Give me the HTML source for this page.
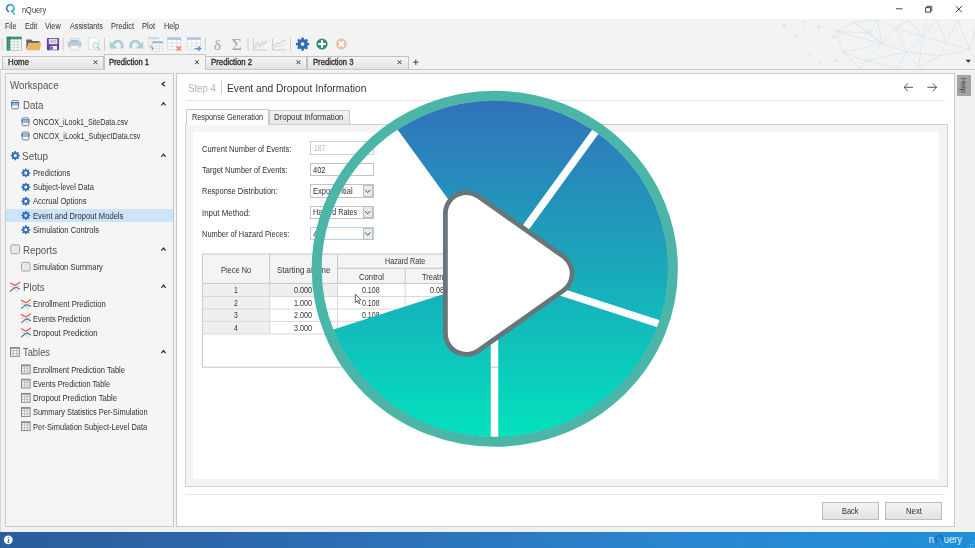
<!DOCTYPE html>
<html><head><meta charset="utf-8"><title>nQuery</title>
<style>
html,body{margin:0;padding:0;}
body{width:975px;height:548px;overflow:hidden;position:relative;background:#f0f0f0;font-family:"Liberation Sans",sans-serif;}
.a{position:absolute;box-sizing:border-box;}
.t{position:absolute;transform-origin:0 50%;white-space:nowrap;line-height:14px;height:14px;font-family:"Liberation Sans",sans-serif;}
#titlebar{left:0;top:0;width:975px;height:19px;background:#fff;}
#toolbar{left:0;top:19px;width:975px;height:50px;background:#f3f3f3;}
#tbline{left:0;top:69px;width:975px;height:1px;background:#c6c6c6;}
#content{left:0;top:70px;width:975px;height:462px;background:#f1f1f1;border-left:1px solid #d6d6d6;border-top:1px solid #f8f8f8;}
.tab{top:55.5px;height:13.5px;border:1px solid #c2c2c2;border-bottom:none;background:linear-gradient(#f4f4f4,#e3e3e3);}
.tab.act{top:54px;height:16px;background:#f3f3f3;border-color:#c6c6c6;}
#ws{left:5px;top:73px;width:168.5px;height:454px;background:#f5f5f5;border:1px solid #c9c9c9;}
#main{left:176px;top:73px;width:779px;height:454px;background:#fff;border:1px solid #c9c9c9;}
#sel{left:6px;top:208.8px;width:166.5px;height:13.4px;background:#cde4f7;}
#status{left:0;top:531.5px;width:975px;height:16.5px;background:linear-gradient(90deg,#2b5c9b 0%,#2c6db3 35%,#2a86d0 70%,#1f8fd8 100%);}
.hl{height:1px;background:#e6e6e6;}
#stab1{left:185.5px;top:108.5px;width:83px;height:16.5px;background:#fbfbfb;border:1px solid #c9c9c9;border-bottom:none;}
#stab2{left:268.5px;top:110px;width:81.5px;height:14px;background:linear-gradient(#f3f3f3,#e6e6e6);border:1px solid #c9c9c9;border-bottom:none;}
#tabbox{left:184.5px;top:124px;width:763px;height:363px;background:#f4f4f4;border:1px solid #cfcfcf;}
#tabin{left:192.5px;top:131.5px;width:746.5px;height:347.5px;background:#fff;}
.inp{left:310px;width:63.5px;height:13.4px;background:#fff;border:1px solid #c3c3c3;}
.dd{left:362.5px;width:10.5px;height:12px;background:#ebebeb;border:1px solid #bdbdbd;}
.btn{top:502px;height:18px;width:57px;background:linear-gradient(#f3f3f3,#e2e2e2);border:1px solid #bcbcbc;}
#help{left:957px;top:75px;width:14px;height:21px;background:#a3a3a3;}
svg{position:absolute;left:0;top:0;}

</style></head>
<body>
<div class="a" id="titlebar"></div>
<div class="a" id="toolbar"></div>
<div class="a" id="tbline"></div>
<div class="a" id="content"></div>
<div class="a tab" style="left:2px;width:102px"></div>
<div class="a tab" style="left:205px;width:102px"></div>
<div class="a tab" style="left:306.5px;width:102px"></div>
<div class="a tab act" style="left:103.5px;width:102px"></div>
<div class="a" id="ws"></div>
<div class="a" id="sel"></div>
<div class="a" id="main"></div>
<div class="a hl" style="left:186px;top:100px;width:759px"></div>
<div class="a hl" style="left:186px;top:494px;width:759px"></div>
<div class="a" id="tabbox"></div>
<div class="a" id="tabin"></div>
<div class="a" id="stab2"></div>
<div class="a" id="stab1"></div>
<div class="a" style="left:221.3px;top:81.3px;width:1px;height:12.5px;background:#cfcfcf"></div>
<div class="a inp" style="top:141.4px;border-color:#cfcfcf"></div>
<div class="a inp" style="top:163.1px"></div>
<div class="a inp" style="top:184.4px"></div>
<div class="a inp" style="top:205.7px"></div>
<div class="a inp" style="top:227px;border-color:#b4d3ea"></div>
<div class="a dd" style="top:185.1px"></div>
<div class="a dd" style="top:206.4px"></div>
<div class="a dd" style="top:227.7px"></div>
<svg width="975" height="548" viewBox="0 0 975 548" shape-rendering="auto">
<g>
<rect x="202.3" y="254" width="330" height="113.2" fill="#fff"/>
<rect x="202.3" y="254" width="330" height="29.4" fill="#f4f4f4"/>
<rect x="202.3" y="283.4" width="67.4" height="50.6" fill="#efefef"/>
<rect x="269.7" y="283.4" width="67.9" height="13.1" fill="#efefef"/>
<g stroke="#d9d9d9" stroke-width="1" fill="none">
<path d="M202.3 296.5H472.8M202.3 309H472.8M202.3 321.4H472.8M202.3 334H472.8"/>
<path d="M269.7 283.4V334M337.6 283.4V334M405.2 283.4V334M472.8 283.4V334"/>
</g>
<g stroke="#c6c6c6" stroke-width="1" fill="none">
<path d="M202.3 283.4H472.8M337.6 268.3H472.8M269.7 254V283.4M337.6 254V283.4M405.2 268.3V283.4M472.8 254V283.4"/>
<rect x="202.3" y="254" width="330" height="113.2"/>
</g>
</g>
</svg>


<div class="a btn" style="left:822px"></div>
<div class="a btn" style="left:885px"></div>
<div class="a" id="help"></div>
<span class="t" style="left:958.5px;top:75.5px;font-size:7.8px;color:#444;transform-origin:0 0;transform:translate(8.8px,1.5px) rotate(90deg);line-height:10px;height:10px;letter-spacing:-0.2px">Help</span>
<div class="a" id="status"></div>
<span class="t" style="left:21.5px;top:2.6px;font-size:8.6px;transform:scaleX(0.8621);color:#3a3a3a;">nQuery</span>
<span class="t" style="left:5.1px;top:19.4px;font-size:8.3px;transform:scaleX(0.8449);color:#303030;">File</span>
<span class="t" style="left:24.6px;top:19.4px;font-size:8.3px;transform:scaleX(0.8603);color:#303030;">Edit</span>
<span class="t" style="left:45.4px;top:19.4px;font-size:8.3px;transform:scaleX(0.8799);color:#303030;">View</span>
<span class="t" style="left:69.8px;top:19.4px;font-size:8.3px;transform:scaleX(0.8674);color:#303030;">Assistants</span>
<span class="t" style="left:110.7px;top:19.4px;font-size:8.3px;transform:scaleX(0.8905);color:#303030;">Predict</span>
<span class="t" style="left:142.0px;top:19.4px;font-size:8.3px;transform:scaleX(0.9093);color:#303030;">Plot</span>
<span class="t" style="left:163.7px;top:19.4px;font-size:8.3px;transform:scaleX(0.8783);color:#303030;">Help</span>
<span class="t" style="left:7.8px;top:55.2px;font-size:8.4px;transform:scaleX(0.9354);color:#303030;-webkit-text-stroke:0.35px #303030">Home</span>
<span class="t" style="left:109.2px;top:55.2px;font-size:8.4px;transform:scaleX(0.9043);color:#303030;-webkit-text-stroke:0.35px #303030">Prediction 1</span>
<span class="t" style="left:210.5px;top:55.2px;font-size:8.4px;transform:scaleX(0.9314);color:#303030;-webkit-text-stroke:0.35px #303030">Prediction 2</span>
<span class="t" style="left:312.5px;top:55.2px;font-size:8.4px;transform:scaleX(0.9156);color:#303030;-webkit-text-stroke:0.35px #303030">Prediction 3</span>
<span class="t" style="left:9.8px;top:77.7px;font-size:11px;transform:scaleX(0.8882);color:#555;">Workspace</span>
<span class="t" style="left:22.6px;top:98.0px;font-size:11px;transform:scaleX(0.8774);color:#555;">Data</span>
<span class="t" style="left:22.3px;top:149.4px;font-size:11px;transform:scaleX(0.9043);color:#555;">Setup</span>
<span class="t" style="left:22.6px;top:242.9px;font-size:11px;transform:scaleX(0.8824);color:#555;">Reports</span>
<span class="t" style="left:22.6px;top:280.0px;font-size:11px;transform:scaleX(0.8828);color:#555;">Plots</span>
<span class="t" style="left:22.6px;top:345.4px;font-size:11px;transform:scaleX(0.8491);color:#555;">Tables</span>
<span class="t" style="left:32.8px;top:115.2px;font-size:8.4px;transform:scaleX(0.8486);color:#303030;">ONCOX_iLook1_SiteData.csv</span>
<span class="t" style="left:32.8px;top:129.0px;font-size:8.4px;transform:scaleX(0.8576);color:#303030;">ONCOX_iLook1_SubjectData.csv</span>
<span class="t" style="left:32.8px;top:166.1px;font-size:8.4px;transform:scaleX(0.8977);color:#303030;">Predictions</span>
<span class="t" style="left:32.8px;top:180.2px;font-size:8.4px;transform:scaleX(0.8945);color:#303030;">Subject-level Data</span>
<span class="t" style="left:32.8px;top:194.4px;font-size:8.4px;transform:scaleX(0.9066);color:#303030;">Accrual Options</span>
<span class="t" style="left:32.8px;top:208.5px;font-size:8.4px;transform:scaleX(0.9115);color:#303030;">Event and Dropout Models</span>
<span class="t" style="left:32.8px;top:223.0px;font-size:8.4px;transform:scaleX(0.9102);color:#303030;">Simulation Controls</span>
<span class="t" style="left:32.8px;top:260.0px;font-size:8.4px;transform:scaleX(0.9034);color:#303030;">Simulation Summary</span>
<span class="t" style="left:32.8px;top:297.2px;font-size:8.4px;transform:scaleX(0.9132);color:#303030;">Enrollment Prediction</span>
<span class="t" style="left:32.8px;top:311.5px;font-size:8.4px;transform:scaleX(0.8851);color:#303030;">Events Prediction</span>
<span class="t" style="left:32.8px;top:325.7px;font-size:8.4px;transform:scaleX(0.9312);color:#303030;">Dropout Prediction</span>
<span class="t" style="left:32.8px;top:362.6px;font-size:8.4px;transform:scaleX(0.9038);color:#303030;">Enrollment Prediction Table</span>
<span class="t" style="left:32.8px;top:376.8px;font-size:8.4px;transform:scaleX(0.8824);color:#303030;">Events Prediction Table</span>
<span class="t" style="left:32.8px;top:391.0px;font-size:8.4px;transform:scaleX(0.9174);color:#303030;">Dropout Prediction Table</span>
<span class="t" style="left:32.8px;top:405.3px;font-size:8.4px;transform:scaleX(0.8889);color:#303030;">Summary Statistics Per-Simulation</span>
<span class="t" style="left:32.8px;top:419.5px;font-size:8.4px;transform:scaleX(0.8921);color:#303030;">Per-Simulation Subject-Level Data</span>
<span class="t" style="left:187.7px;top:81.2px;font-size:10.8px;transform:scaleX(0.8937);color:#b4b4b4;">Step 4</span>
<span class="t" style="left:227.3px;top:81.2px;font-size:10.8px;transform:scaleX(0.9487);color:#333;">Event and Dropout Information</span>
<span class="t" style="left:191.5px;top:111.0px;font-size:8.2px;transform:scaleX(0.8913);color:#303030;">Response Generation</span>
<span class="t" style="left:274.0px;top:111.0px;font-size:8.2px;transform:scaleX(0.9603);color:#303030;">Dropout Information</span>
<span class="t" style="left:202.0px;top:142.0px;font-size:8.4px;transform:scaleX(0.8965);color:#303030;">Current Number of Events:</span>
<span class="t" style="left:202.0px;top:163.0px;font-size:8.4px;transform:scaleX(0.8982);color:#303030;">Target Number of Events:</span>
<span class="t" style="left:202.0px;top:184.3px;font-size:8.4px;transform:scaleX(0.8936);color:#303030;">Response Distribution:</span>
<span class="t" style="left:202.0px;top:205.7px;font-size:8.4px;transform:scaleX(0.9430);color:#303030;">Input Method:</span>
<span class="t" style="left:202.0px;top:227.0px;font-size:8.4px;transform:scaleX(0.8888);color:#303030;">Number of Hazard Pieces:</span>
<span class="t" style="left:313.5px;top:142.2px;font-size:8.2px;transform:scaleX(0.8411);color:#bdbdbd;">187</span>
<span class="t" style="left:313.0px;top:163.7px;font-size:8.2px;transform:scaleX(0.9143);color:#303030;">402</span>
<span class="t" style="left:313.0px;top:184.9px;font-size:8.2px;transform:scaleX(0.9253);color:#303030;">Exponential</span>
<span class="t" style="left:313.0px;top:206.2px;font-size:8.2px;transform:scaleX(0.8829);color:#303030;">Hazard Rates</span>
<span class="t" style="left:313.0px;top:227.6px;font-size:8.2px;transform:scaleX(0.9863);color:#303030;">4</span>
<span class="t" style="left:220.8px;top:263.5px;font-size:8.2px;transform:scaleX(0.9087);color:#333;">Piece No</span>
<span class="t" style="left:276.6px;top:263.5px;font-size:8.2px;transform:scaleX(0.9698);color:#333;">Starting at time</span>
<span class="t" style="left:384.8px;top:255.4px;font-size:8.2px;transform:scaleX(0.8745);color:#333;">Hazard Rate</span>
<span class="t" style="left:358.7px;top:271.1px;font-size:8.2px;transform:scaleX(0.9430);color:#333;">Control</span>
<span class="t" style="left:421.7px;top:271.1px;font-size:8.2px;transform:scaleX(0.9131);color:#333;">Treatment</span>
<span class="t" style="left:233.8px;top:284.1px;font-size:8.2px;transform:scaleX(0.8329);color:#333;">1</span>
<span class="t" style="left:294.4px;top:284.1px;font-size:8.2px;transform:scaleX(0.8780);color:#333;">0.000</span>
<span class="t" style="left:361.9px;top:284.1px;font-size:8.2px;transform:scaleX(0.8585);color:#333;">0.108</span>
<span class="t" style="left:429.8px;top:284.1px;font-size:8.2px;transform:scaleX(0.8780);color:#333;">0.081</span>
<span class="t" style="left:233.8px;top:296.8px;font-size:8.2px;transform:scaleX(0.8329);color:#333;">2</span>
<span class="t" style="left:294.4px;top:296.8px;font-size:8.2px;transform:scaleX(0.8780);color:#333;">1.000</span>
<span class="t" style="left:361.9px;top:296.8px;font-size:8.2px;transform:scaleX(0.8585);color:#333;">0.108</span>
<span class="t" style="left:429.8px;top:296.8px;font-size:8.2px;transform:scaleX(0.8780);color:#333;">0.081</span>
<span class="t" style="left:233.8px;top:309.4px;font-size:8.2px;transform:scaleX(0.8329);color:#333;">3</span>
<span class="t" style="left:294.4px;top:309.4px;font-size:8.2px;transform:scaleX(0.8780);color:#333;">2.000</span>
<span class="t" style="left:361.9px;top:309.4px;font-size:8.2px;transform:scaleX(0.8585);color:#333;">0.108</span>
<span class="t" style="left:429.8px;top:309.4px;font-size:8.2px;transform:scaleX(0.8780);color:#333;">0.081</span>
<span class="t" style="left:233.8px;top:322.1px;font-size:8.2px;transform:scaleX(0.8329);color:#333;">4</span>
<span class="t" style="left:294.4px;top:322.1px;font-size:8.2px;transform:scaleX(0.8780);color:#333;">3.000</span>
<span class="t" style="left:361.9px;top:322.1px;font-size:8.2px;transform:scaleX(0.8585);color:#333;">0.108</span>
<span class="t" style="left:429.8px;top:322.1px;font-size:8.2px;transform:scaleX(0.8780);color:#333;">0.081</span>
<span class="t" style="left:842.3px;top:504.2px;font-size:8.4px;transform:scaleX(0.8859);color:#303030;">Back</span>
<span class="t" style="left:905.5px;top:504.2px;font-size:8.4px;transform:scaleX(0.9284);color:#303030;">Next</span>
<svg width="975" height="548" viewBox="0 0 975 548">
<g fill="none" stroke="#cde2ec" stroke-width="0.65">
<path d="M836.5 31.4L842.7 51.9M836.5 31.4L854.0 22.0M854.0 22.0L881.7 43.7M836.5 31.4L881.7 43.7M842.7 51.9L881.7 43.7M842.7 51.9L865.3 61.0M865.3 61.0L881.7 43.7M854.0 22.0L877.6 20.0M877.6 20.0L881.7 43.7M877.6 20.0L896.0 28.3M881.7 43.7L906.3 51.9M896.0 28.3L906.3 51.9M881.7 43.7L896.0 28.3M906.3 51.9L918.6 67.3M906.3 51.9L922.7 36.5M896.0 28.3L922.7 36.5M908.3 20.0L922.7 36.5M922.7 36.5L946.3 42.6M922.7 36.5L918.6 67.3M946.3 42.6L937.0 20.0M946.3 42.6L939.1 56.0M946.3 42.6L969.9 49.8M969.9 49.8L957.6 20.0M946.3 42.6L957.6 20.0M969.9 49.8L975.0 29.3M939.1 56.0L918.6 67.3M906.3 51.9L898.0 67.3M865.3 61.0L906.3 51.9M908.3 20.0L896.0 28.3M926.0 20.0L922.7 36.5M939.1 56.0L969.9 49.8M969.9 49.8L975.0 62.0M842.7 51.9L860.0 68.0M865.3 61.0L860.0 68.0M870.0 33.0L836.5 31.4M870.0 33.0L881.7 43.7M870.0 33.0L854.0 22.0M877.6 20.0L870.0 33.0M896.0 28.3L908.3 20.0M922.7 36.5L937.0 20.0M906.3 51.9L939.1 56.0M898.0 67.3L865.3 61.0"/>
</g>
<g fill="#d8ebf3" opacity="0.9"><circle cx="784" cy="26" r="2.2"/><circle cx="805" cy="22" r="1.5"/><circle cx="795" cy="36" r="1.7"/><circle cx="819" cy="27" r="2.4"/><circle cx="810" cy="55" r="1.8"/><circle cx="820" cy="63" r="1.5"/><circle cx="834" cy="37" r="2"/><circle cx="836" cy="61" r="1.8"/><circle cx="803" cy="31" r="1.1"/></g>
<path d="M784 26L795 36M805 22L803 31L795 36M810 55L804 60" stroke="#e0eef4" stroke-width="0.5" fill="none"/>
<defs><linearGradient id="qg" x1="6" y1="12" x2="14" y2="5" gradientUnits="userSpaceOnUse"><stop offset="0" stop-color="#2a62b4"/><stop offset="0.45" stop-color="#2b86c4"/><stop offset="1" stop-color="#43c6b0"/></linearGradient></defs>
<path d="M8.5 11.4A3.6 3.6 0 1 1 13.5 9.9Q12.6 11.2 11.7 11" fill="none" stroke="url(#qg)" stroke-width="1.7" stroke-linecap="round"/>
<path d="M11.9 11.2L14.4 14.3" fill="none" stroke="#3fc2b0" stroke-width="1.5" stroke-linecap="round"/>
<path d="M896 8.8H902.5" stroke="#333" stroke-width="0.9"/>
<path d="M925.6 7.6H930.4V12.2H925.6ZM927 7.6V6.3H931.8V10.9H930.4" stroke="#333" stroke-width="0.9" fill="none"/>
<path d="M955.7 6L962 12.3M962 6L955.7 12.3" stroke="#333" stroke-width="0.9"/>
<path d="M965.6 59.8H971L968.3 62.8Z" fill="#333"/>
<path d="M2.2 39V50" stroke="#dcdcdc" stroke-width="1.4"/>
<rect x="7" y="37" width="14.4" height="13.2" fill="#fdfdfd" stroke="#6fa893" stroke-width="0.5"/>
<rect x="6.8" y="36.8" width="14.8" height="2.6" fill="#2f8a6f"/><rect x="6.8" y="36.8" width="3.6" height="13.6" fill="#2f8a6f"/>
<path d="M10.4 42H21.4M10.4 44.6H21.4M10.4 47.3H21.4M14.1 39.4V50.2M17.6 39.4V50.2" stroke="#b9c4c0" stroke-width="0.6" fill="none"/>
<path d="M8 40.8h1.2M8 43.4h1.2M8 46h1.2M8 48.6h1.2M12 38h1.2M15.4 38h1.2M19 38h1.2" stroke="#7fd6bf" stroke-width="0.8" fill="none"/>
<path d="M26.3 50V39.4H31.2L32.5 40.9H39.5V43.4H28.4L26.3 50Z" fill="#5f6368"/>
<path d="M28.6 42.8H41.3L39.6 50.2H26.8Z" fill="#e9b45f"/>
<rect x="46.9" y="38" width="12.2" height="12.2" rx="0.8" fill="#6b3fa0"/>
<rect x="48.8" y="38.8" width="8.6" height="5.4" fill="#e4e4e8"/><rect x="50" y="39.8" width="6.2" height="3" fill="#c4c4c8"/>
<rect x="50.6" y="46" width="6.4" height="3.6" fill="#f4f4f4"/><rect x="51.2" y="46.6" width="1.6" height="2.6" fill="#5a3590"/>
<path d="M63.2 38V50.5" stroke="#c4c4c4" stroke-width="0.8"/>
<path d="M104.5 38V50.5" stroke="#c4c4c4" stroke-width="0.8"/>
<path d="M205.2 38V50.5" stroke="#c4c4c4" stroke-width="0.8"/>
<path d="M248.0 38V50.5" stroke="#c4c4c4" stroke-width="0.8"/>
<path d="M290.5 38V50.5" stroke="#c4c4c4" stroke-width="0.8"/>
<rect x="70.2" y="38.4" width="8.6" height="4" fill="#e3edf3" stroke="#bccbd6" stroke-width="0.6"/>
<rect x="67.8" y="41.6" width="13.6" height="5.6" rx="1" fill="#bfc9d3"/>
<rect x="70.6" y="40" width="7.8" height="2.2" fill="#9fc3e0"/>
<rect x="70.4" y="45.6" width="8.4" height="4.4" fill="#f4f6f8" stroke="#c6d0d8" stroke-width="0.6"/>
<path d="M88.4 37.6H95.6L98.6 40.6V49.6H88.4Z" fill="#fbfbfb" stroke="#cfd6dc" stroke-width="0.7"/>
<circle cx="95.4" cy="45.4" r="2.7" fill="#f3f8fb" stroke="#a9c4d8" stroke-width="0.9"/><path d="M97.4 47.4L100.6 50.4" stroke="#a9c4d8" stroke-width="1.2"/>
<path d="M122.20 48.6V45.6A4.4 4.4 0 0 0 113.50 44.6" fill="none" stroke="#a8ced8" stroke-width="2.8"/>
<path d="M109.80 41.4V48.6H117.80Z" fill="#a8ced8"/>
<path d="M130.80 48.6V45.6A4.4 4.4 0 0 1 139.50 44.6" fill="none" stroke="#a8ced8" stroke-width="2.8"/>
<path d="M143.20 41.4V48.6H135.20Z" fill="#a8ced8"/>
<rect x="148.4" y="37.4" width="10.4" height="9.4" fill="#fbfbfb" stroke="#cfd4d9" stroke-width="0.6"/>
<rect x="148.4" y="37.4" width="10.4" height="1.9" fill="#c5d8e8"/>
<path d="M148.4 41.8H158.8M148.4 44.3H158.8M151.9 39.3V46.8M155.4 39.3V46.8" stroke="#cfd4d9" stroke-width="0.6" fill="none"/>
<rect x="152.6" y="41.4" width="10.2" height="9.6" fill="#fbfbfb" stroke="#cfd4d9" stroke-width="0.6"/>
<rect x="152.6" y="41.4" width="10.2" height="1.9" fill="#8fb3d4"/>
<path d="M152.6 45.9H162.8M152.6 48.4H162.8M156.1 43.3V51.0M159.4 43.3V51.0" stroke="#cfd4d9" stroke-width="0.6" fill="none"/>
<path d="M150.6 45.4C150.6 47.6 151.4 48.2 153 48.4M152 47L153.4 48.5L151.8 49.6" stroke="#4d86c4" stroke-width="0.8" fill="none"/>
<rect x="167.4" y="37.4" width="13.4" height="12.4" fill="#fbfbfb" stroke="#cfd4d9" stroke-width="0.6"/>
<rect x="167.4" y="37.4" width="13.4" height="2.5" fill="#a9c5df"/>
<path d="M167.4 43.2H180.8M167.4 46.5H180.8M172.0 39.9V49.8M176.4 39.9V49.8" stroke="#cfd4d9" stroke-width="0.6" fill="none"/>
<path d="M176.6 46.4L181 50.6M181 46.4L176.6 50.6" stroke="#e39079" stroke-width="1.7"/>
<rect x="187.2" y="37.4" width="13.6" height="12.2" fill="#fbfbfb" stroke="#cfd4d9" stroke-width="0.6"/>
<rect x="187.2" y="37.4" width="13.6" height="2.4" fill="#a9c5df"/>
<path d="M187.2 43.1H200.8M187.2 46.3H200.8M191.8 39.8V49.6M196.3 39.8V49.6" stroke="#cfd4d9" stroke-width="0.6" fill="none"/>
<path d="M194.6 48.6H200.2M198.2 46.4L200.6 48.6L198.2 50.8" stroke="#5b93cc" stroke-width="1.3" fill="none"/>
<text x="217.4" y="49.6" font-family="Liberation Serif, serif" font-size="15.5" fill="#a8a8a8" text-anchor="middle">δ</text>
<text x="236.8" y="49.6" font-family="Liberation Serif, serif" font-size="16" fill="#a8a8a8" text-anchor="middle" textLength="10.4" lengthAdjust="spacingAndGlyphs">Σ</text>
<path d="M253.4 38.4V50H267" stroke="#c9c9c9" stroke-width="0.9" fill="none"/>
<path d="M254.4 47.6L257.6 42.2L260.2 46.2L262.6 41.6L264.4 44L266.6 39.4" stroke="#a8c6df" stroke-width="0.8" fill="none"/>
<path d="M254.4 49L258 45.6L261 47.4L264 44L266.6 42.6" stroke="#c3d5e4" stroke-width="0.7" fill="none"/>
<path d="M272.6 38.4V50H286.4" stroke="#c9c9c9" stroke-width="0.9" fill="none"/>
<path d="M273.6 46.4L277 43L280 43.6L283 41L286 39.6" stroke="#a8c6df" stroke-width="0.8" fill="none"/>
<path d="M273.6 48.6L277.4 46L281 46.2L286 43.4" stroke="#c3d5e4" stroke-width="0.7" fill="none"/>
<path d="M307.52 42.79 L309.21 43.00 L309.21 45.20 L307.52 45.41 L307.00 46.66 L308.05 48.00 L306.50 49.55 L305.16 48.50 L303.91 49.02 L303.70 50.71 L301.50 50.71 L301.29 49.02 L300.04 48.50 L298.70 49.55 L297.15 48.00 L298.20 46.66 L297.68 45.41 L295.99 45.20 L295.99 43.00 L297.68 42.79 L298.20 41.54 L297.15 40.20 L298.70 38.65 L300.04 39.70 L301.29 39.18 L301.50 37.49 L303.70 37.49 L303.91 39.18 L305.16 39.70 L306.50 38.65 L308.05 40.20 L307.00 41.54Z M300.79 44.10 a1.81 1.81 0 1 0 3.62 0 a1.81 1.81 0 1 0 -3.62 0Z" fill="#2d6cb6" fill-rule="evenodd"/>
<circle cx="322" cy="44" r="5.6" fill="#368d75"/><path d="M318.3 44H325.7M322 40.3V47.7" stroke="#fff" stroke-width="2.1"/>
<circle cx="341.4" cy="44" r="5.4" fill="#e9bfa8"/><path d="M338.9 41.5L343.9 46.5M343.9 41.5L338.9 46.5" stroke="#fff" stroke-width="2"/>
<path d="M93.6 60.3L97.4 64.1M97.4 60.3L93.6 64.1" stroke="#3a3a3a" stroke-width="1"/>
<path d="M195.1 60.3L198.9 64.1M198.9 60.3L195.1 64.1" stroke="#3a3a3a" stroke-width="1"/>
<path d="M296.6 60.3L300.4 64.1M300.4 60.3L296.6 64.1" stroke="#3a3a3a" stroke-width="1"/>
<path d="M397.6 60.3L401.4 64.1M401.4 60.3L397.6 64.1" stroke="#3a3a3a" stroke-width="1"/>
<path d="M413 62.2H418.6M415.8 59.4V65" stroke="#333" stroke-width="0.9"/>
<path d="M165 81.8L162 84L165 86.2" stroke="#333" stroke-width="1.3" fill="none"/>
<path d="M161.4 105.4L163.5 102.7L165.6 105.4" stroke="#333" stroke-width="1.3" fill="none"/>
<path d="M161.4 156.9L163.5 154.2L165.6 156.9" stroke="#333" stroke-width="1.3" fill="none"/>
<path d="M161.4 250.7L163.5 248.0L165.6 250.7" stroke="#333" stroke-width="1.3" fill="none"/>
<path d="M161.4 287.8L163.5 285.1L165.6 287.8" stroke="#333" stroke-width="1.3" fill="none"/>
<path d="M161.4 353.2L163.5 350.5L165.6 353.2" stroke="#333" stroke-width="1.3" fill="none"/>
<rect x="11.7" y="100.6" width="6.6" height="8.2" rx="1" fill="#fafafa" stroke="#6e6e6e" stroke-width="0.9"/>
<rect x="10.9" y="101.9" width="8.2" height="3.3" rx="0.8" fill="#3a7cc4"/>
<text x="15.00" y="104.65" font-family="Liberation Sans, sans-serif" font-size="3.4" font-weight="bold" fill="#e8f0fa" text-anchor="middle">csv</text>
<rect x="22.2" y="117.9" width="6.6" height="7.8" rx="1" fill="#fafafa" stroke="#6e6e6e" stroke-width="0.9"/>
<rect x="21.4" y="119.2" width="8.2" height="3.2" rx="0.8" fill="#3a7cc4"/>
<text x="25.50" y="121.73" font-family="Liberation Sans, sans-serif" font-size="3.4" font-weight="bold" fill="#e8f0fa" text-anchor="middle">csv</text>
<rect x="22.2" y="132.1" width="6.6" height="7.8" rx="1" fill="#fafafa" stroke="#6e6e6e" stroke-width="0.9"/>
<rect x="21.4" y="133.4" width="8.2" height="3.2" rx="0.8" fill="#3a7cc4"/>
<text x="25.50" y="135.93" font-family="Liberation Sans, sans-serif" font-size="3.4" font-weight="bold" fill="#e8f0fa" text-anchor="middle">csv</text>
<path d="M18.59 154.73 L19.84 154.84 L19.84 156.36 L18.59 156.47 L18.24 157.31 L19.04 158.27 L17.97 159.34 L17.01 158.54 L16.17 158.89 L16.06 160.14 L14.54 160.14 L14.43 158.89 L13.59 158.54 L12.63 159.34 L11.56 158.27 L12.36 157.31 L12.01 156.47 L10.76 156.36 L10.76 154.84 L12.01 154.73 L12.36 153.89 L11.56 152.93 L12.63 151.86 L13.59 152.66 L14.43 152.31 L14.54 151.06 L16.06 151.06 L16.17 152.31 L17.01 152.66 L17.97 151.86 L19.04 152.93 L18.24 153.89Z M13.74 155.60 a1.56 1.56 0 1 0 3.13 0 a1.56 1.56 0 1 0 -3.13 0Z" fill="#2d6cb6" fill-rule="evenodd"/>
<path d="M29.02 172.05 L30.24 172.16 L30.24 173.64 L29.02 173.75 L28.68 174.57 L29.46 175.52 L28.42 176.56 L27.47 175.78 L26.65 176.12 L26.54 177.34 L25.06 177.34 L24.95 176.12 L24.13 175.78 L23.18 176.56 L22.14 175.52 L22.92 174.57 L22.58 173.75 L21.36 173.64 L21.36 172.16 L22.58 172.05 L22.92 171.23 L22.14 170.28 L23.18 169.24 L24.13 170.02 L24.95 169.68 L25.06 168.46 L26.54 168.46 L26.65 169.68 L27.47 170.02 L28.42 169.24 L29.46 170.28 L28.68 171.23Z M24.27 172.90 a1.53 1.53 0 1 0 3.06 0 a1.53 1.53 0 1 0 -3.06 0Z" fill="#2d6cb6" fill-rule="evenodd"/>
<path d="M29.02 186.25 L30.24 186.36 L30.24 187.84 L29.02 187.95 L28.68 188.77 L29.46 189.72 L28.42 190.76 L27.47 189.98 L26.65 190.32 L26.54 191.54 L25.06 191.54 L24.95 190.32 L24.13 189.98 L23.18 190.76 L22.14 189.72 L22.92 188.77 L22.58 187.95 L21.36 187.84 L21.36 186.36 L22.58 186.25 L22.92 185.43 L22.14 184.48 L23.18 183.44 L24.13 184.22 L24.95 183.88 L25.06 182.66 L26.54 182.66 L26.65 183.88 L27.47 184.22 L28.42 183.44 L29.46 184.48 L28.68 185.43Z M24.27 187.10 a1.53 1.53 0 1 0 3.06 0 a1.53 1.53 0 1 0 -3.06 0Z" fill="#2d6cb6" fill-rule="evenodd"/>
<path d="M29.02 200.45 L30.24 200.56 L30.24 202.04 L29.02 202.15 L28.68 202.97 L29.46 203.92 L28.42 204.96 L27.47 204.18 L26.65 204.52 L26.54 205.74 L25.06 205.74 L24.95 204.52 L24.13 204.18 L23.18 204.96 L22.14 203.92 L22.92 202.97 L22.58 202.15 L21.36 202.04 L21.36 200.56 L22.58 200.45 L22.92 199.63 L22.14 198.68 L23.18 197.64 L24.13 198.42 L24.95 198.08 L25.06 196.86 L26.54 196.86 L26.65 198.08 L27.47 198.42 L28.42 197.64 L29.46 198.68 L28.68 199.63Z M24.27 201.30 a1.53 1.53 0 1 0 3.06 0 a1.53 1.53 0 1 0 -3.06 0Z" fill="#2d6cb6" fill-rule="evenodd"/>
<path d="M29.02 214.65 L30.24 214.76 L30.24 216.24 L29.02 216.35 L28.68 217.17 L29.46 218.12 L28.42 219.16 L27.47 218.38 L26.65 218.72 L26.54 219.94 L25.06 219.94 L24.95 218.72 L24.13 218.38 L23.18 219.16 L22.14 218.12 L22.92 217.17 L22.58 216.35 L21.36 216.24 L21.36 214.76 L22.58 214.65 L22.92 213.83 L22.14 212.88 L23.18 211.84 L24.13 212.62 L24.95 212.28 L25.06 211.06 L26.54 211.06 L26.65 212.28 L27.47 212.62 L28.42 211.84 L29.46 212.88 L28.68 213.83Z M24.27 215.50 a1.53 1.53 0 1 0 3.06 0 a1.53 1.53 0 1 0 -3.06 0Z" fill="#2d6cb6" fill-rule="evenodd"/>
<path d="M29.02 228.95 L30.24 229.06 L30.24 230.54 L29.02 230.65 L28.68 231.47 L29.46 232.42 L28.42 233.46 L27.47 232.68 L26.65 233.02 L26.54 234.24 L25.06 234.24 L24.95 233.02 L24.13 232.68 L23.18 233.46 L22.14 232.42 L22.92 231.47 L22.58 230.65 L21.36 230.54 L21.36 229.06 L22.58 228.95 L22.92 228.13 L22.14 227.18 L23.18 226.14 L24.13 226.92 L24.95 226.58 L25.06 225.36 L26.54 225.36 L26.65 226.58 L27.47 226.92 L28.42 226.14 L29.46 227.18 L28.68 228.13Z M24.27 229.80 a1.53 1.53 0 1 0 3.06 0 a1.53 1.53 0 1 0 -3.06 0Z" fill="#2d6cb6" fill-rule="evenodd"/>
<rect x="10.9" y="244.9" width="8.6" height="8.8" rx="1.2" fill="#ececec" stroke="#9a9a9a" stroke-width="0.9"/>
<path d="M14.2 246.4V252.2M16.6 246.4V252.2" stroke="#d9dee3" stroke-width="0.8"/>
<rect x="21.5" y="262.4" width="8.6" height="8.6" rx="1.2" fill="#ececec" stroke="#9a9a9a" stroke-width="0.9"/>
<path d="M24.8 263.9V269.5M27.2 263.9V269.5" stroke="#d9dee3" stroke-width="0.8"/>
<polyline points="10.5,283.0 15.0,285.4 19.5,282.4" fill="none" stroke="#cf5f4c" stroke-width="1.2" stroke-linecap="round" stroke-linejoin="round"/>
<polyline points="10.8,286.0 15.0,288.0 19.0,285.6" fill="none" stroke="#f2bd84" stroke-width="1.1" stroke-linecap="round" stroke-dasharray="1.4 1.2"/>
<polyline points="10.5,291.0 14.2,288.0 16.2,287.3 19.5,289.0" fill="none" stroke="#3d80c2" stroke-width="1.2" stroke-linecap="round" stroke-linejoin="round"/>
<polyline points="15.0,289.0 17.2,291.3" fill="none" stroke="#f2bd84" stroke-width="1.1" stroke-linecap="round" stroke-dasharray="1.2 1.3"/>
<polyline points="21.5,300.4 26.0,302.8 30.5,299.8" fill="none" stroke="#cf5f4c" stroke-width="1.2" stroke-linecap="round" stroke-linejoin="round"/>
<polyline points="21.8,303.4 26.0,305.4 30.0,303.0" fill="none" stroke="#f2bd84" stroke-width="1.1" stroke-linecap="round" stroke-dasharray="1.4 1.2"/>
<polyline points="21.5,308.4 25.2,305.4 27.2,304.7 30.5,306.4" fill="none" stroke="#3d80c2" stroke-width="1.2" stroke-linecap="round" stroke-linejoin="round"/>
<polyline points="26.0,306.4 28.2,308.7" fill="none" stroke="#f2bd84" stroke-width="1.1" stroke-linecap="round" stroke-dasharray="1.2 1.3"/>
<polyline points="21.5,314.6 26.0,317.0 30.5,314.0" fill="none" stroke="#cf5f4c" stroke-width="1.2" stroke-linecap="round" stroke-linejoin="round"/>
<polyline points="21.8,317.6 26.0,319.6 30.0,317.2" fill="none" stroke="#f2bd84" stroke-width="1.1" stroke-linecap="round" stroke-dasharray="1.4 1.2"/>
<polyline points="21.5,322.6 25.2,319.6 27.2,318.9 30.5,320.6" fill="none" stroke="#3d80c2" stroke-width="1.2" stroke-linecap="round" stroke-linejoin="round"/>
<polyline points="26.0,320.6 28.2,322.9" fill="none" stroke="#f2bd84" stroke-width="1.1" stroke-linecap="round" stroke-dasharray="1.2 1.3"/>
<polyline points="21.5,328.8 26.0,331.2 30.5,328.2" fill="none" stroke="#cf5f4c" stroke-width="1.2" stroke-linecap="round" stroke-linejoin="round"/>
<polyline points="21.8,331.8 26.0,333.8 30.0,331.4" fill="none" stroke="#f2bd84" stroke-width="1.1" stroke-linecap="round" stroke-dasharray="1.4 1.2"/>
<polyline points="21.5,336.8 25.2,333.8 27.2,333.1 30.5,334.8" fill="none" stroke="#3d80c2" stroke-width="1.2" stroke-linecap="round" stroke-linejoin="round"/>
<polyline points="26.0,334.8 28.2,337.1" fill="none" stroke="#f2bd84" stroke-width="1.1" stroke-linecap="round" stroke-dasharray="1.2 1.3"/>
<rect x="10.5" y="347.5" width="8.8" height="8.8" fill="#f4f4f4" stroke="#7c7c7c" stroke-width="0.9"/>
<rect x="10.5" y="347.5" width="8.8" height="1.3" fill="#8a8a8a"/>
<path d="M13.5 348.5V355.8M16.5 348.5V355.8M11.0 350.7H18.8M11.0 353.5H18.8" stroke="#b8b8b8" stroke-width="0.8" fill="none"/>
<rect x="21.5" y="365.0" width="8.6" height="8.8" fill="#f4f4f4" stroke="#7c7c7c" stroke-width="0.9"/>
<rect x="21.5" y="365.0" width="8.6" height="1.3" fill="#8a8a8a"/>
<path d="M24.5 366.0V373.3M27.3 366.0V373.3M22.0 368.2H29.6M22.0 371.0H29.6" stroke="#b8b8b8" stroke-width="0.8" fill="none"/>
<rect x="21.5" y="379.2" width="8.6" height="8.8" fill="#f4f4f4" stroke="#7c7c7c" stroke-width="0.9"/>
<rect x="21.5" y="379.2" width="8.6" height="1.3" fill="#8a8a8a"/>
<path d="M24.5 380.2V387.5M27.3 380.2V387.5M22.0 382.4H29.6M22.0 385.2H29.6" stroke="#b8b8b8" stroke-width="0.8" fill="none"/>
<rect x="21.5" y="393.4" width="8.6" height="8.8" fill="#f4f4f4" stroke="#7c7c7c" stroke-width="0.9"/>
<rect x="21.5" y="393.4" width="8.6" height="1.3" fill="#8a8a8a"/>
<path d="M24.5 394.4V401.7M27.3 394.4V401.7M22.0 396.6H29.6M22.0 399.4H29.6" stroke="#b8b8b8" stroke-width="0.8" fill="none"/>
<rect x="21.5" y="407.6" width="8.6" height="8.8" fill="#f4f4f4" stroke="#7c7c7c" stroke-width="0.9"/>
<rect x="21.5" y="407.6" width="8.6" height="1.3" fill="#8a8a8a"/>
<path d="M24.5 408.6V415.9M27.3 408.6V415.9M22.0 410.8H29.6M22.0 413.6H29.6" stroke="#b8b8b8" stroke-width="0.8" fill="none"/>
<rect x="21.5" y="421.8" width="8.6" height="8.8" fill="#f4f4f4" stroke="#7c7c7c" stroke-width="0.9"/>
<rect x="21.5" y="421.8" width="8.6" height="1.3" fill="#8a8a8a"/>
<path d="M24.5 422.8V430.1M27.3 422.8V430.1M22.0 425.0H29.6M22.0 427.8H29.6" stroke="#b8b8b8" stroke-width="0.8" fill="none"/>
<path d="M365 189.8L367.7 192.5L370.4 189.8" stroke="#333" stroke-width="0.9" fill="none"/>
<path d="M365 211.1L367.7 213.8L370.4 211.1" stroke="#333" stroke-width="0.9" fill="none"/>
<path d="M365 232.5L367.7 235.2L370.4 232.5" stroke="#333" stroke-width="0.9" fill="none"/>
<path d="M913 87.3H904M908 83.4L904 87.3L908 91.2" stroke="#444" stroke-width="0.9" fill="none"/>
<path d="M927.4 87.3H936.6M932.6 83.4L936.6 87.3L932.6 91.2" stroke="#444" stroke-width="0.9" fill="none"/>
<path d="M355.3 294.3V302.6L357.3 300.9L358.6 303.7L359.8 303.2L358.5 300.4L361 299.9Z" fill="#fff" stroke="#222" stroke-width="0.7"/>
<circle cx="8.3" cy="539.8" r="4.4" fill="#fff"/>
<text x="8.3" y="542.6" font-family="Liberation Serif, serif" font-style="italic" font-weight="bold" font-size="8" fill="#2b4f86" text-anchor="middle">i</text>
<text x="928.8" y="542.5" font-family="Liberation Sans, sans-serif" font-size="10" fill="#eaf3fb" textLength="5.2" lengthAdjust="spacingAndGlyphs">n</text>
<text x="943.8" y="542.5" font-family="Liberation Sans, sans-serif" font-size="10" fill="#eaf3fb" textLength="18" lengthAdjust="spacingAndGlyphs">uery</text>
<path d="M942.2 541A3.5 3.5 0 1 0 937.6 542.4" fill="none" stroke="#2667b0" stroke-width="1.4"/><path d="M940 541.6L943 545.4" stroke="#3bb5b0" stroke-width="1.3"/>
<path d="M972.5 546.5h1v1h-1zM970 546.5h1v1h-1zM972.5 544h1v1h-1zM967.5 546.5h1v1h-1zM970 544h1v1h-1zM972.5 541.5h1v1h-1z" fill="#9fc9ea"/>
</svg>
<svg width="975" height="548" viewBox="0 0 975 548">
<defs>
<linearGradient id="pg" x1="0" y1="100.8" x2="0" y2="436.8" gradientUnits="userSpaceOnUse">
<stop offset="0" stop-color="#3272bb"/><stop offset="0.5" stop-color="#1aa8bb"/><stop offset="1" stop-color="#02e2bd"/>
</linearGradient>
<mask id="pm" maskUnits="userSpaceOnUse" x="0" y="0" width="975" height="548">
<ellipse cx="494.8" cy="268.8" rx="173.6" ry="168.5" fill="#fff"/>
<line x1="494.5" y1="270.5" x2="647.3" y2="60.2" stroke="#000" stroke-width="7.5"/><line x1="494.5" y1="270.5" x2="741.8" y2="350.8" stroke="#000" stroke-width="7.5"/><line x1="494.5" y1="270.5" x2="494.5" y2="530.5" stroke="#000" stroke-width="7.5"/>
<polygon points="503.1,275.0 327.0,32.2 103.1,275.0 217.5,366.7" fill="#000"/>
</mask>
</defs>
<rect x="300" y="80" width="400" height="380" fill="url(#pg)" mask="url(#pm)"/>
<ellipse cx="494.8" cy="268.8" rx="178.1" ry="173.0" fill="none" stroke="#4bb5a8" stroke-width="10.0"/>
<polygon points="466.4,213.6 466.4,333.4 551.1,273.5" fill="#697679" stroke="#697679" stroke-width="46.8" stroke-linejoin="round"/>
<polygon points="466.4,213.6 466.4,333.4 551.1,273.5" fill="#fff" stroke="#fff" stroke-width="37.2" stroke-linejoin="round"/>
</svg>

</body></html>
